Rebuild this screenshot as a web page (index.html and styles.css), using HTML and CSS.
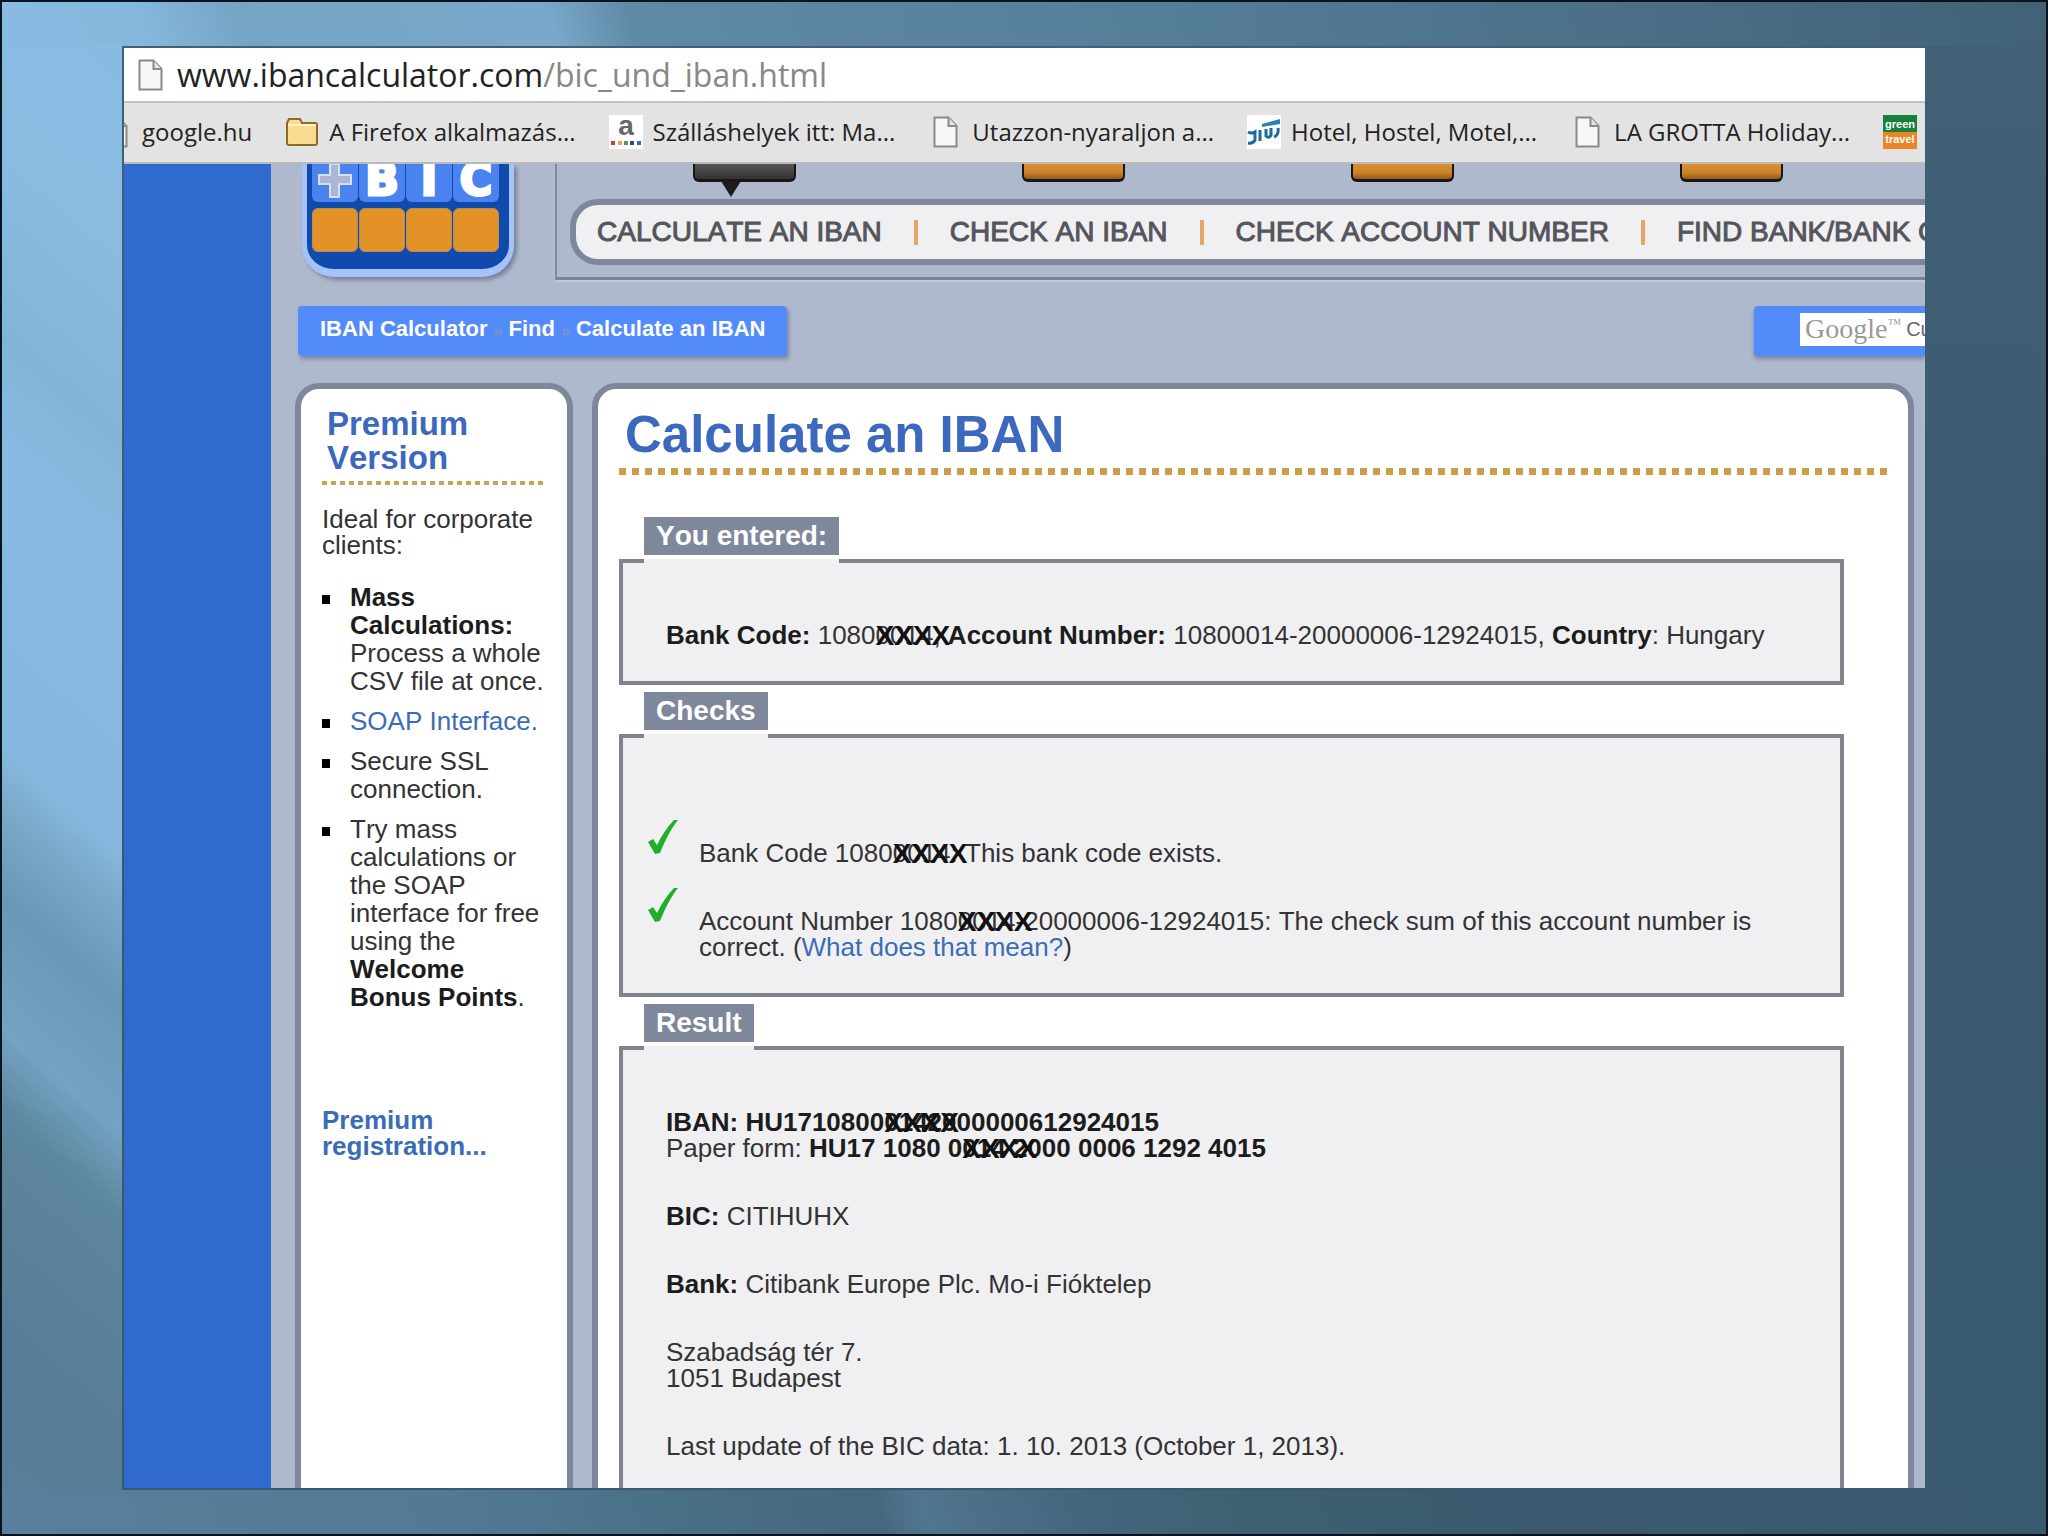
FILE: index.html
```
<!DOCTYPE html>
<html lang="en">
<head>
    <meta charset="UTF-8">
    <meta name="viewport" content="width=device-width, initial-scale=1.0">
    <title>Calculate an IBAN</title>
    <link rel="stylesheet" href="styles.css">
</head>
<body>
    <!-- shared page icon -->
    <svg class="defs" width="0" height="0" aria-hidden="true">
        <symbol id="doc" viewBox="0 0 25 32">
            <path d="M1.5 1.5h14l8 8.500v20.500h-22z" fill="#f7f7f7" stroke="#8a8a8a" stroke-width="2"/>
            <path d="M15.500 1.500v8.500h8" fill="#e4e4e4" stroke="#8a8a8a" stroke-width="2"/>
        </symbol>
        <symbol id="check" viewBox="0 0 32 34">
            <path d="M1 22l5-3 4 6c5-10 10-18 17-25h4c-8 10-13 21-18 33l-5 1z" fill="#1fb02a"/>
        </symbol>
    </svg>

    <div class="browser">
        <div class="address-bar">
            <svg class="doc-icon"><use href="#doc"/></svg>
            <div class="url">www.ibancalculator.com<span>/bic_und_iban.html</span></div>
        </div>

        <nav class="bookmarks">
            <a href="#"><i><svg class="doc-icon"><use href="#doc"/></svg></i>google.hu</a>
            <a href="#"><i><svg width="34" height="30" viewBox="0 0 34 30">
                <path d="M2 6l2-4h11l2 4h13q2 0 2 2v18q0 2-2 2H4q-2 0-2-2z" fill="#f9dc92" stroke="#8d6a2c" stroke-width="2"/>
                <path d="M3 8h28" stroke="#fff2c4" stroke-width="2"/>
            </svg></i>A Firefox alkalmazás...</a>
            <a href="#"><i><svg width="34" height="34" viewBox="0 0 34 34">
                <rect width="34" height="34" fill="#fff"/>
                <text x="17" y="20" class="fav-a">a</text>
                <path d="M2 28h4" stroke="#d33" stroke-width="4"/>
                <path d="M9 28h4" stroke="#e9a25a" stroke-width="4"/>
                <path d="M15 28h4" stroke="#4a9c6a" stroke-width="4"/>
                <path d="M21 28h4" stroke="#445" stroke-width="4"/>
                <path d="M28 28h4" stroke="#36c" stroke-width="4"/>
            </svg></i>Szálláshelyek itt: Ma...</a>
            <a href="#"><i><svg class="doc-icon"><use href="#doc"/></svg></i>Utazzon-nyaraljon a...</a>
            <a href="#"><i><svg width="34" height="34" viewBox="0 0 34 34">
                <rect width="34" height="34" fill="#fff"/>
                <path d="M15 9l18-5v5l-18 3z" fill="#2d7fae"/>
                <path d="M1 17q4 2 7 0v8q-2 4-7 3M13 15v11M19 14v7q3 3 5-1v-7M31 13q1 7-4 9" fill="none" stroke="#1e6a9c" stroke-width="3"/>
            </svg></i>Hotel, Hostel, Motel,...</a>
            <a href="#"><i><svg class="doc-icon"><use href="#doc"/></svg></i>LA GROTTA Holiday...</a>
            <a href="#" aria-label="Green Travel"><i><svg width="34" height="34" viewBox="0 0 34 34">
                <rect width="34" height="17" fill="#16803c"/>
                <rect y="17" width="34" height="17" fill="#ea8424"/>
                <text x="17" y="13" class="fav-green">green</text>
                <text x="17" y="28" class="fav-green">travel</text>
            </svg></i></a>
        </nav>

        <div class="viewport">
            <div class="site">
                <header class="header">
                    <a href="#" class="logo" aria-label="IBAN and BIC">
                        <span class="plus"><svg width="38" height="38" viewBox="0 0 38 38"><path d="M14 0h9v11h12v9h-12v13h-9v-13h-11v-9h11z" fill="#aab6d2" stroke="#d5e0f5" stroke-width="2"/></svg></span>
                        <span>B</span><span>I</span><span>C</span>
                        <b></b><b></b><b></b><b></b>
                    </a>
                    <div class="menu">
                        <div class="keys">
                            <a href="#" class="active" aria-label="Calculate"></a>
                            <a href="#" aria-label="Check"></a>
                            <a href="#" aria-label="Account"></a>
                            <a href="#" aria-label="Bank"></a>
                        </div>
                        <nav class="tabs">
                            <a href="#">CALCULATE AN IBAN</a>
                            <a href="#">CHECK AN IBAN</a>
                            <a href="#">CHECK ACCOUNT NUMBER</a>
                            <a href="#">FIND BANK/BANK CODE</a>
                        </nav>
                    </div>
                </header>

                <div class="toolbar">
                    <nav class="breadcrumb">
                        <a href="#">IBAN Calculator</a><i>»</i><a href="#">Find</a><i>»</i><a href="#">Calculate an IBAN</a>
                    </nav>
                    <form class="search">
                        <label for="q">Google<sup>™</sup></label>
                        <input id="q" type="text" placeholder="Custom Search">
                    </form>
                </div>

                <div class="columns">
                    <aside class="sidebar">
                        <h2>Premium Version</h2>
                        <p>Ideal for corporate clients:</p>
                        <ul>
                            <li><b>Mass Calculations:</b> Process a whole CSV file at once.</li>
                            <li><a href="#">SOAP Interface.</a></li>
                            <li>Secure SSL connection.</li>
                            <li>Try mass calculations or the SOAP interface for free using the <b>Welcome Bonus Points</b>.</li>
                        </ul>
                        <a href="#" class="register">Premium registration...</a>
                    </aside>

                    <main class="content">
                        <h1>Calculate an IBAN</h1>

                        <section class="group">
                            <h2>You entered:</h2>
                            <div class="box entered">
                                <p><b>Bank Code:</b> 1080<span class="masked">0014,<em>XXXX</em></span> <b>Account Number:</b> 10800014-20000006-12924015, <b>Country</b>: Hungary</p>
                            </div>
                        </section>

                        <section class="group">
                            <h2>Checks</h2>
                            <div class="box checks">
                                <div class="check">
                                    <svg><use href="#check"/></svg>
                                    <p>Bank Code 1080<span class="masked">0014:<em>XXXX</em></span> This bank code exists.</p>
                                </div>
                                <div class="check">
                                    <svg><use href="#check"/></svg>
                                    <p>Account Number 1080<span class="masked">0014<em>XXXX</em></span>-20000006-12924015: The check sum of this account number is correct. (<a href="#">What does that mean?</a>)</p>
                                </div>
                            </div>
                        </section>

                        <section class="group">
                            <h2>Result</h2>
                            <div class="box result">
                                <p><b>IBAN: HU1710800<span class="masked">0142<em>XXXX</em></span>000000612924015</b><br>
                                Paper form: <b>HU17 1080 0<span class="masked">014<em>XXXX</em></span> 2000 0006 1292 4015</b></p>
                                <p><b>BIC:</b> CITIHUHX</p>
                                <p><b>Bank:</b> Citibank Europe Plc. Mo-i Fióktelep</p>
                                <p>Szabadság tér 7.<br>1051 Budapest</p>
                                <p>Last update of the BIC data: 1. 10. 2013 (October 1, 2013).</p>
                            </div>
                        </section>
                    </main>
                </div>
            </div>
        </div>
    </div>
</body>
</html>
```
FILE: styles.css
```
* {
    box-sizing: border-box;
}

body {
    margin: 0;
    height: 100vh;
    padding: 46px 121px 46px 122px;
    border: 2px solid #0a1420;
    display: flex;
    font-family: "Liberation Sans", Arial, sans-serif;
    font-size: 26px;
    line-height: 26px;
    font-kerning: none;
    color: #333;
    background:
        linear-gradient(75deg, #587f9c 0%, #527a93 22%, #466b80 38%, #44697f 43%, #50758e 45%, #42667c 53%, #3d6070 62%, #3b586e 75%, #39596f 100%) bottom / 100% 46px no-repeat,
        linear-gradient(75deg, #89bbe2 0%, #86b8de 7%, #75a5c4 12%, #79a8ca 27%, #5f8aa6 31%, #56809b 52%, #4c728a 75%, #426176 100%) top / 100% 46px no-repeat,
        linear-gradient(221deg, #89bbe2 0%, #88bce1 15%, #81b4d6 27%, #88bbe2 34%, #86b8df 52%, #7aabcb 55%, #6998b6 61%, #73a3c3 69%, #5d879e 74%, #567d95 88%, #587f9c 100%) left / 122px 100% no-repeat,
        linear-gradient(#426176, #3a596e 50%, #39596f);
}

a {
    color: #3b6db5;
    text-decoration: none;
}

h1, h2, p, ul {
    margin: 0;
    padding: 0;
}

b {
    color: #1c1c1c;
}

.defs {
    position: absolute;
}

.browser {
    flex: 1;
    min-width: 0;
    display: flex;
    flex-direction: column;
    overflow: hidden;
    background: #fff;
}

.doc-icon {
    width: 25px;
    height: 32px;
}

.address-bar {
    flex: none;
    height: 53px;
    padding: 0 14px;
    display: flex;
    align-items: center;
    gap: 14px;
    font-family: "Open Sans", "Noto Sans", sans-serif;
    font-size: 32px;
    color: #222;
}

.url span {
    color: #888;
}

.bookmarks {
    flex: none;
    height: 63px;
    margin-left: -26px;
    border-top: 2px solid #c4c4c4;
    border-bottom: 2px solid #bbb;
    background: #e3e3e3;
    display: flex;
    align-items: center;
    gap: 33px;
    padding-bottom: 2px;
    white-space: nowrap;
    font-family: "Open Sans", "Noto Sans", sans-serif;
    font-size: 24px;
}

.bookmarks a {
    display: flex;
    align-items: center;
    gap: 10px;
    color: #222;
}

.bookmarks i {
    width: 34px;
    display: flex;
    justify-content: center;
}

.fav-a {
    font: bold 28px "Liberation Sans", sans-serif;
    text-anchor: middle;
    fill: #666;
}

.fav-green {
    font: bold 11px "Liberation Sans", sans-serif;
    text-anchor: middle;
    fill: #fff;
}

.viewport {
    flex: 1;
    min-height: 0;
    overflow: hidden;
    display: flex;
    background: #316acf;
}

.site {
    flex: 1;
    min-width: 0;
    margin-left: 147px;
    padding: 0 11px 0 24px;
    background: #afb9cd;
}

.header {
    height: 142px;
    display: flex;
    align-items: flex-start;
    gap: 41px;
    padding-left: 7px;
    margin-right: -11px;
    overflow: hidden;
}

.logo {
    flex: none;
    width: 212px;
    height: 113px;
    padding: 0 5px;
    border: 5px solid #a5c3fa;
    border-top: 0;
    border-bottom-width: 8px;
    border-radius: 0 0 32px 32px;
    background: #0f4aac;
    box-shadow: 3px 3px 4px #77819a;
    display: grid;
    grid-template-columns: repeat(4, 46px);
    grid-template-rows: 38px 44px;
    gap: 6px 1px;
}

.logo span {
    height: 38px;
    overflow: hidden;
    border-radius: 0 0 6px 6px;
    background: #4a83f0;
    color: #fff;
    font: bold 44px/32px "DejaVu Sans", sans-serif;
    text-align: center;
    -webkit-text-stroke: 3px #fff;
}

.logo b {
    border-radius: 6px;
    background: #e39227;
    border: 1px solid #b98d55;
}

.menu {
    flex: none;
    height: 116px;
    padding-left: 13px;
    border-left: 2px solid #8089a0;
    border-bottom: 3px solid #79829a;
    box-shadow: 0 2px 2px #c3cde0;
}

.keys {
    display: flex;
    gap: 226px;
    padding-left: 123px;
    margin-bottom: 17px;
}

.keys a {
    width: 103px;
    height: 18px;
    border: solid #1c1610;
    border-width: 0 2px 3px;
    border-radius: 0 0 6px 6px;
    background: linear-gradient(#dc9034, #c98128 60%, #8d5a1c);
    position: relative;
}

.keys .active {
    background: linear-gradient(#555, #333);
}

.keys .active::after {
    content: "";
    position: absolute;
    top: 17px;
    left: 26px;
    border: solid transparent;
    border-width: 16px 10px 0;
    border-top-color: #1c1c1c;
}

.tabs {
    height: 66px;
    padding: 0 21px;
    border: 6px solid #7f879a;
    border-radius: 28px;
    background: #f0f0f2;
    display: flex;
    align-items: center;
    white-space: nowrap;
    font-size: 28px;
}

.tabs a {
    color: #55555c;
    -webkit-text-stroke: 1px #55555c;
}

.tabs a + a::before {
    content: "";
    display: inline-block;
    width: 4px;
    height: 25px;
    margin: 0 32px;
    background: #e6a563;
    vertical-align: -4px;
}

.toolbar {
    display: flex;
    justify-content: space-between;
    height: 77px;
    align-items: flex-start;
    padding-left: 3px;
    margin-right: -11px;
}

.breadcrumb {
    height: 50px;
    padding: 0 22px;
    border-radius: 4px;
    background: #538bfa;
    box-shadow: 2px 3px 4px #7a86a5;
    font-size: 22px;
    font-weight: bold;
    line-height: 46px;
}

.breadcrumb a {
    color: #fff;
}

.breadcrumb i {
    display: inline-block;
    width: 21px;
    text-align: center;
    font-size: 16px;
    font-style: normal;
    color: #7f95c4;
}

.search {
    width: 171px;
    height: 50px;
    padding: 7px 0 10px 46px;
    border-radius: 4px 0 0 4px;
    background: #538bfa;
    box-shadow: 0 3px 4px #7a86a5;
    display: flex;
}

.search label {
    flex: none;
    padding-left: 5px;
    background: #fff;
    color: #999;
    font-family: "Liberation Serif", serif;
    font-size: 28px;
    line-height: 32px;
}

.search sup {
    font-size: 14px;
    line-height: 0;
}

.search input {
    min-width: 0;
    flex: 1;
    padding: 0 0 0 5px;
    border: 0;
    background: #fff;
    font: 20px "Liberation Sans", sans-serif;
}

.search input::placeholder {
    color: #666;
}

.columns {
    display: flex;
    gap: 19px;
}

.sidebar, .content {
    border: 6px solid #7f879a;
    border-radius: 24px 24px 0 0;
    background: #fff;
    padding-top: 18px;
}

.sidebar {
    flex: none;
    width: 278px;
    padding-left: 21px;
    padding-right: 20px;
}

.content {
    flex: 1;
    min-width: 0;
    padding-left: 21px;
    padding-right: 21px;
}

.sidebar h2 {
    padding: 0 0 10px 5px;
    margin-bottom: 21px;
    font-size: 33px;
    line-height: 34px;
    color: #3c68bd;
    background: repeating-linear-gradient(90deg, #c9a25c 0 5px, transparent 5px 9px) bottom / 100% 4px no-repeat;
}

.sidebar ul {
    list-style: none;
    margin: 25px 0 96px;
    line-height: 28px;
}

.sidebar li {
    padding-left: 28px;
    margin-bottom: 12px;
    background: linear-gradient(#000, #000) 0 12px / 8px 9px no-repeat;
}

.register {
    display: block;
    font-weight: bold;
}

.content h1 {
    padding: 0 0 12px 6px;
    margin-bottom: 42px;
    font-size: 51px;
    line-height: 56px;
    color: #3c68bd;
    background: repeating-linear-gradient(90deg, #cd9d4c 0 7px, transparent 7px 13px) bottom / 100% 7px no-repeat;
}

.group {
    margin: 0 43px 7px 0;
}

/* the tab cuts a gap into the top border of the box below */
.group h2 {
    position: relative;
    width: fit-content;
    margin-left: 25px;
    padding: 0 12px;
    border-bottom: 4px solid #fff;
    box-shadow: 0 4px #f0f0f0;
    background: #7f879a;
    background-clip: padding-box;
    color: #fff;
    font-size: 28px;
    line-height: 38px;
}

.box {
    border: 4px solid #80848c;
    background: #f0f0f2;
    padding: 59px 40px 33px 43px;
}

.entered {
    white-space: nowrap;
}

.checks {
    padding-top: 82px;
    padding-left: 24px;
}

.check {
    display: flex;
    gap: 20px;
}

.check + .check {
    margin-top: 22px;
}

.check svg {
    flex: none;
    width: 32px;
    height: 34px;
}

.check p {
    padding-top: 20px;
}

.result {
    padding-bottom: 60px;
}

.result p + p {
    margin-top: 42px;
}

/* crossed-out digits */
.masked {
    position: relative;
}

.masked em {
    position: absolute;
    top: 3px;
    left: 0;
    font-size: 28px;
    font-style: normal;
    font-weight: bold;
    color: #111;
}
```
